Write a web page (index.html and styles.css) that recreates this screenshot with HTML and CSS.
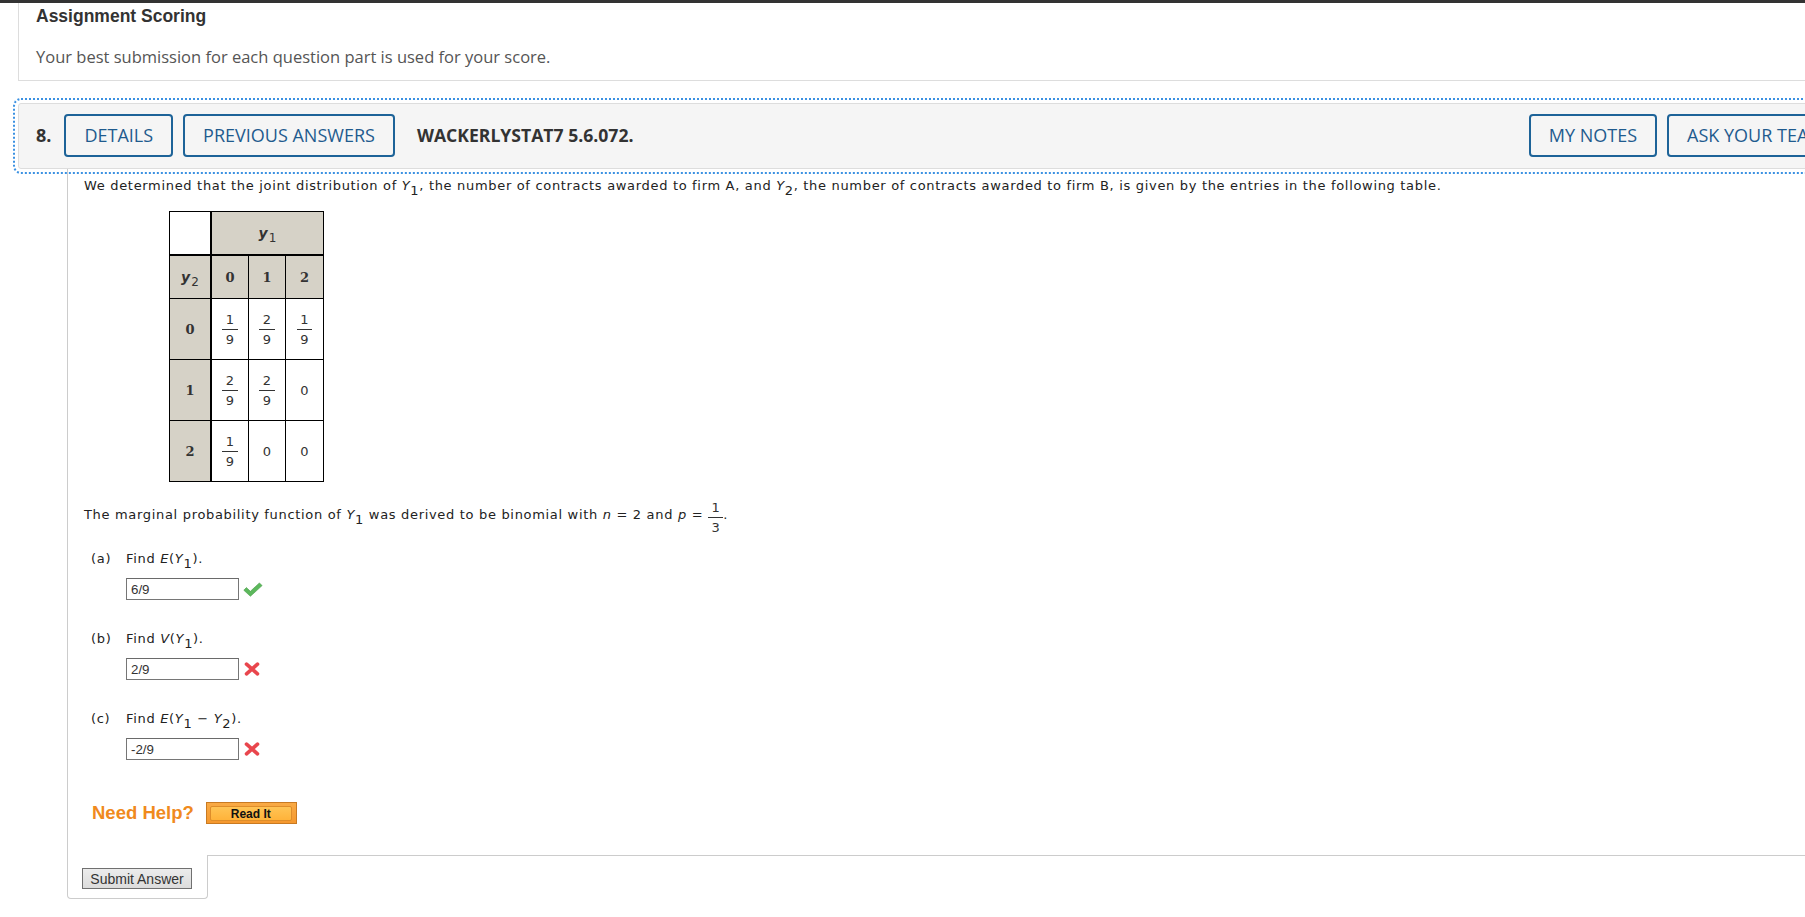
FILE: index.html
```html
<!DOCTYPE html>
<html lang="en">
<head>
<meta charset="utf-8">
<title>Assignment Scoring</title>
<link rel="stylesheet" href="styles.css">
</head>
<body>
<div class="topbar"></div>
<div class="wrap">
  <section class="scoring">
    <h2 class="scoring-title">Assignment Scoring</h2>
    <p class="scoring-text">Your best submission for each question part is used for your score.</p>
  </section>

  <div class="qhead">
    <span class="qnum">8.</span>
    <button class="qbtn first">DETAILS</button>
    <button class="qbtn">PREVIOUS ANSWERS</button>
    <span class="qref">WACKERLYSTAT7 5.6.072.</span>
    <button class="qbtn push">MY NOTES</button>
    <button class="qbtn">ASK YOUR TEACHER</button>
  </div>

  <div class="qbody">
    <div class="qcontent">
      <p class="para">We determined that the joint distribution of <i>Y</i><sub class="s">1</sub>, the number of contracts awarded to firm A, and <i>Y</i><sub class="s">2</sub>, the number of contracts awarded to firm B, is given by the entries in the following table.</p>

      <div class="jt">
        <div class="c c1 r1 blank"></div>
        <div class="c r1 lc hd span3"><span class="var"><i>y</i><sub class="hs">1</sub></span></div>

        <div class="c c1 hd"><span class="var"><i>y</i><sub class="hs">2</sub></span></div>
        <div class="c hd">0</div>
        <div class="c hd">1</div>
        <div class="c lc hd">2</div>

        <div class="c c1 hd">0</div>
        <div class="c"><span class="frac"><span class="num">1</span><span class="den">9</span></span></div>
        <div class="c"><span class="frac"><span class="num">2</span><span class="den">9</span></span></div>
        <div class="c lc"><span class="frac"><span class="num">1</span><span class="den">9</span></span></div>

        <div class="c c1 hd">1</div>
        <div class="c"><span class="frac"><span class="num">2</span><span class="den">9</span></span></div>
        <div class="c"><span class="frac"><span class="num">2</span><span class="den">9</span></span></div>
        <div class="c lc">0</div>

        <div class="c c1 lr hd">2</div>
        <div class="c lr"><span class="frac"><span class="num">1</span><span class="den">9</span></span></div>
        <div class="c lr">0</div>
        <div class="c lc lr">0</div>
      </div>

      <p class="para para2">The marginal probability function of <i>Y</i><sub class="s">1</sub> was derived to be binomial with <i>n</i> = 2 and <i>p</i> = <span class="frac inl"><span class="num">1</span><span class="den">3</span></span>.</p>

      <div class="part first-part">
        <span class="plabel">(a)</span>
        <div class="pbody">
          <div class="ptext">Find <i>E</i>(<i>Y</i><sub class="s">1</sub>).</div>
          <div class="prow">
            <input class="ans" type="text" value="6/9">
            <svg class="mark ok" width="20" height="15" viewBox="0 0 20 15"><path d="M0.8 8.2 L3.4 5.6 L7.4 9.3 L16.4 0.9 L19.1 3.6 L7.4 14.3 Z" fill="#5cb85c" stroke="#4a9e4a" stroke-width="0.6" stroke-linejoin="round"/></svg>
          </div>
        </div>
      </div>

      <div class="part">
        <span class="plabel">(b)</span>
        <div class="pbody">
          <div class="ptext">Find <i>V</i>(<i>Y</i><sub class="s">1</sub>).</div>
          <div class="prow">
            <input class="ans" type="text" value="2/9">
            <svg class="mark bad" width="16" height="14" viewBox="0 0 16 14"><path d="M2.5 2.2 L13.5 11.8 M13.5 2.2 L2.5 11.8" stroke="#e9464d" stroke-width="3.6" stroke-linecap="round"/></svg>
          </div>
        </div>
      </div>

      <div class="part">
        <span class="plabel">(c)</span>
        <div class="pbody">
          <div class="ptext">Find <i>E</i>(<i>Y</i><sub class="s">1</sub> &minus; <i>Y</i><sub class="s">2</sub>).</div>
          <div class="prow">
            <input class="ans" type="text" value="-2/9">
            <svg class="mark bad" width="16" height="14" viewBox="0 0 16 14"><path d="M2.5 2.2 L13.5 11.8 M13.5 2.2 L2.5 11.8" stroke="#e9464d" stroke-width="3.6" stroke-linecap="round"/></svg>
          </div>
        </div>
      </div>

      <div class="help">
        <span class="help-text">Need Help?</span>
        <span class="readit"><span class="readit-in">Read It</span></span>
      </div>
    </div>

    <div class="qfoot">
      <div class="submit-tab"><button class="submit">Submit Answer</button></div>
      <div class="foot-fill"></div>
    </div>
  </div>
</div>
</body>
</html>
```

FILE: styles.css
```css
html, body {
  margin: 0;
  padding: 0;
  overflow: hidden;
  background: #fff;
}

body {
  width: 1805px;
  height: 917px;
  font-family: "DejaVu Sans", Verdana, sans-serif;
  color: #222;
}

.topbar {
  height: 3px;
  background: #333;
}

.wrap {
  margin-left: 18px;
  width: 1874px;
}

/* Assignment scoring box */
.scoring {
  border: 1px solid #ddd;
  border-top: 0;
  padding: 3px 17px 11px;
}

.scoring-title {
  margin: 0;
  font: bold 17.5px/20px "Liberation Sans", Arial, sans-serif;
  color: #333;
}

.scoring-text {
  margin: 19px 0 0;
  font: 16.5px/24px "Open Sans", "Liberation Sans", sans-serif;
  color: #555;
}

/* Question header panel */
.qhead {
  margin-top: 22px;
  display: flex;
  align-items: center;
  background: #f5f5f5;
  border: 1px solid #ddd;
  border-radius: 3px;
  padding: 10px 17px 11px;
  outline: 2px dotted #3b91e2;
  outline-offset: 3px;
}

.qnum {
  font: bold 18px/25px "Open Sans", sans-serif;
  color: #333;
  margin-right: 13px;
}

.qbtn {
  font: 18px/25px "Open Sans", sans-serif;
  color: #1f5b8e;
  background: transparent;
  border: 2px solid #1d6398;
  border-radius: 4px;
  padding: 7px 18px;
  margin: 0 0 0 10px;
  white-space: nowrap;
}

.qbtn.first {
  margin-left: 0;
}

.qbtn.push {
  margin-left: auto;
}

.qref {
  margin-left: 22px;
  font: bold 17.6px/25px "Open Sans", sans-serif;
  color: #333;
}

/* Question body */
.qbody {
  margin-left: 49px;
}

.qcontent {
  border-left: 1px solid #ccc;
  padding: 8px 0 31px 16px;
  font-size: 13px;
}

.para {
  margin: 0;
  font-size: 13px;
  line-height: 18px;
  letter-spacing: 0.68px;
}

.s {
  font-size: 13px;
  line-height: 0;
  vertical-align: -5px;
}

/* joint distribution table */
.jt {
  margin: 16px 0 0 85px;
  display: grid;
  grid-template-columns: 42px 37px 37px 37px;
  grid-template-rows: 44px 43px 61px 61px 60px;
  width: max-content;
  border: 1px solid #000;
  letter-spacing: 0;
}

.c {
  box-sizing: border-box;
  border-right: 1px solid #000;
  border-bottom: 1px solid #000;
  display: flex;
  align-items: center;
  justify-content: center;
  background: #fff;
  color: #333;
  font-size: 13px;
}

.c1 { border-right-width: 2px; }
.r1 { border-bottom-width: 2px; }
.lc { border-right: 0; }
.lr { border-bottom: 0; }

.span3 { grid-column: span 3; }

.hd {
  background: #d6d2c7;
  font-family: "DejaVu Serif", Georgia, serif;
  font-weight: bold;
  color: #333;
}

.var {
  display: inline-block;
  line-height: 18px;
  font-family: "DejaVu Sans", Verdana, sans-serif;
}

.var i {
  font-size: 14px;
  font-weight: bold;
}

.hs {
  font-family: "DejaVu Sans", sans-serif;
  font-size: 12px;
  font-weight: normal;
  line-height: 0;
  vertical-align: -4px;
  margin-left: 1px;
}

.frac {
  display: inline-block;
  text-align: center;
  color: #333;
  letter-spacing: 0;
}

.num {
  display: block;
  line-height: 13px;
  padding: 0 3.5px 3px;
  border-bottom: 1px solid #333;
}

.den {
  display: block;
  line-height: 13px;
  padding-top: 3px;
}

.frac.inl {
  vertical-align: -13px;
}

.para2 {
  margin-top: 19px;
}

/* parts */
.part {
  display: flex;
  margin: 30px 0 0 7px;
  line-height: 18px;
  letter-spacing: 0.68px;
}

.part.first-part {
  margin-top: 16px;
}

.plabel {
  width: 35px;
  flex: none;
}

.prow {
  margin-top: 10px;
  display: flex;
  align-items: center;
  letter-spacing: 0;
}

.ans {
  box-sizing: border-box;
  width: 113px;
  height: 22px;
  margin: 0;
  padding: 0 4px;
  border: 1px solid #767676;
  border-top-color: #6a6a6a;
  font: 13.33px "Liberation Sans", Arial, sans-serif;
  color: #333;
  background: #fff;
}

.mark {
  margin-left: 4px;
  display: block;
}

.mark.bad {
  margin-left: 5px;
}

/* help row */
.help {
  margin: 42px 0 0 8px;
  display: flex;
  align-items: center;
  height: 22px;
}

.help-text {
  font: bold 18.5px "Liberation Sans", Arial, sans-serif;
  color: #f08a1d;
}

.readit {
  margin-left: 12px;
  box-sizing: border-box;
  width: 91px;
  height: 22px;
  padding: 3px 4px 2px 3px;
  background: linear-gradient(#f9aa45, #f5982e);
  border: 1px solid #c97a22;
  display: flex;
}

.readit-in {
  flex: 1;
  border: 1px solid #de8d2a;
  border-radius: 2px;
  background: linear-gradient(#ffc455, #ffb33a);
  font: bold 12px/14px "Liberation Sans", Arial, sans-serif;
  color: #111;
  text-align: center;
}

/* footer with submit tab */
.qfoot {
  display: flex;
}

.submit-tab {
  box-sizing: border-box;
  width: 141px;
  height: 44px;
  border: 1px solid #ccc;
  border-top: 0;
  border-radius: 0 0 4px 4px;
  padding: 13px 0 0 14px;
}

.submit {
  box-sizing: border-box;
  width: 110px;
  height: 21px;
  margin: 0;
  padding: 0;
  border: 1px solid #707070;
  background: linear-gradient(#ececec, #dcdcdc);
  font: 14px/18px "Liberation Sans", Arial, sans-serif;
  color: #333;
}

.foot-fill {
  flex: 1;
  border-top: 1px solid #ccc;
}
```
